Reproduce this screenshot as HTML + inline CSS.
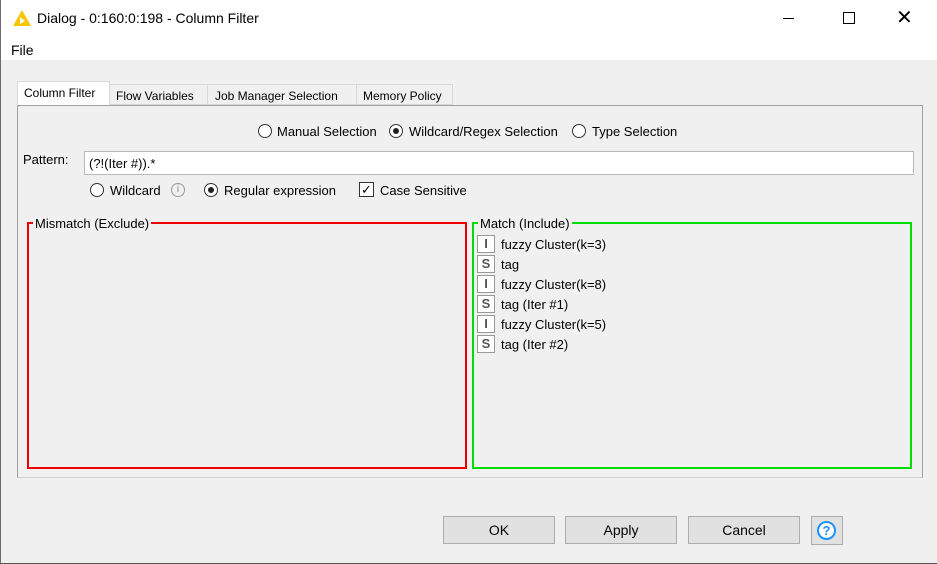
<!DOCTYPE html>
<html><head><style>
*{box-sizing:border-box;margin:0;padding:0}
body{width:937px;height:564px;background:#f0f0f0;font-family:"Liberation Sans",sans-serif;font-size:12px;color:#000;position:relative;overflow:hidden}
.a{position:absolute;white-space:nowrap}
.rad{position:absolute;width:14px;height:14px;border:1px solid #333;border-radius:50%;background:#fff}
.rad.on::after{content:"";position:absolute;left:3px;top:3px;width:6px;height:6px;border-radius:50%;background:#222}
.btn{position:absolute;top:516px;height:28px;width:112px;border:1px solid #adadad;background:#e1e1e1;text-align:center;line-height:26px;font-size:14px}
.ic{position:absolute;left:477px;width:18px;height:18px;border:1px solid #999;background:#fff;font-weight:bold;font-size:13px;text-align:center;line-height:16px;color:#555}
.it{position:absolute;left:501px;font-size:13px}
</style></head><body>
<div class="a" style="left:0;top:0;width:937px;height:60px;background:#fff"></div>
<div class="a" style="left:0;top:0;width:1px;height:564px;background:#6b6b6b"></div>
<div class="a" style="left:0;top:563px;width:937px;height:1px;background:#555"></div>
<svg class="a" style="left:12px;top:9px" width="20" height="18"><polygon points="10,1 19,17 1,17" fill="#f6c700"/><polygon points="8,8 13,12 8,15" fill="#fff"/></svg>
<div class="a" style="left:37px;top:10px;font-size:14px">Dialog - 0:160:0:198 - Column Filter</div>
<div class="a" style="left:783px;top:18px;width:11px;height:1px;background:#000"></div>
<div class="a" style="left:843px;top:12px;width:12px;height:12px;border:1px solid #000"></div>
<div class="a" style="left:896px;top:5px;font-size:20px;font-weight:300">✕</div>
<div class="a" style="left:11px;top:42px;font-size:14px">File</div>
<div class="a" style="left:17px;top:81px;width:93px;height:24px;background:#fff;border:1px solid #d9d9d9;border-bottom:none"></div>
<div class="a" style="left:24px;top:86px">Column Filter</div>
<div class="a" style="left:110px;top:84px;width:98px;height:21px;border:1px solid #d9d9d9;border-left:none"></div>
<div class="a" style="left:116px;top:89px">Flow Variables</div>
<div class="a" style="left:208px;top:84px;width:149px;height:21px;border:1px solid #d9d9d9;border-left:none"></div>
<div class="a" style="left:215px;top:89px">Job Manager Selection</div>
<div class="a" style="left:357px;top:84px;width:96px;height:21px;border:1px solid #d9d9d9;border-left:none"></div>
<div class="a" style="left:363px;top:89px">Memory Policy</div>
<div class="a" style="left:17px;top:105px;width:906px;height:373px;border:1px solid #a0a0a0;border-bottom-color:#d0d0d0"></div>
<div class="rad" style="left:258px;top:124px"></div><div class="a" style="left:277px;top:124px;font-size:13px">Manual Selection</div>
<div class="rad on" style="left:389px;top:124px"></div><div class="a" style="left:409px;top:124px;font-size:13px">Wildcard/Regex Selection</div>
<div class="rad" style="left:572px;top:124px"></div><div class="a" style="left:592px;top:124px;font-size:13px">Type Selection</div>
<div class="a" style="left:23px;top:152px;font-size:13px">Pattern:</div>
<div class="a" style="left:84px;top:151px;width:830px;height:24px;background:#fff;border:1px solid #b8b8b8"></div>
<div class="a" style="left:89px;top:156px;font-size:13px">(?!(Iter #)).*</div>
<div class="rad" style="left:90px;top:183px"></div><div class="a" style="left:110px;top:183px;font-size:13px">Wildcard</div>
<div class="a" style="left:171px;top:183px;width:14px;height:14px;border:1px solid #999;border-radius:50%;color:#888;font-size:10px;text-align:center;line-height:12px">i</div>
<div class="rad on" style="left:204px;top:183px"></div><div class="a" style="left:224px;top:183px;font-size:13px">Regular expression</div>
<div class="a" style="left:359px;top:182px;width:15px;height:15px;border:1px solid #333;background:#fff;font-size:13px;line-height:13px;text-align:center">✓</div>
<div class="a" style="left:380px;top:183px;font-size:13px">Case Sensitive</div>
<div class="a" style="left:27px;top:222px;width:440px;height:247px;border:2px solid #ee0000"></div>
<div class="a" style="left:33px;top:216px;background:#f0f0f0;padding:0 2px;font-size:13px">Mismatch (Exclude)</div>
<div class="a" style="left:472px;top:222px;width:440px;height:247px;border:2px solid #00dd00"></div>
<div class="a" style="left:478px;top:216px;background:#f0f0f0;padding:0 2px;font-size:13px">Match (Include)</div>
<div class="ic" style="top:235px">I</div><div class="it" style="top:237px">fuzzy Cluster(k=3)</div>
<div class="ic" style="top:255px">S</div><div class="it" style="top:257px">tag</div>
<div class="ic" style="top:275px">I</div><div class="it" style="top:277px">fuzzy Cluster(k=8)</div>
<div class="ic" style="top:295px">S</div><div class="it" style="top:297px">tag (Iter #1)</div>
<div class="ic" style="top:315px">I</div><div class="it" style="top:317px">fuzzy Cluster(k=5)</div>
<div class="ic" style="top:335px">S</div><div class="it" style="top:337px">tag (Iter #2)</div>
<div class="btn" style="left:443px">OK</div>
<div class="btn" style="left:565px">Apply</div>
<div class="btn" style="left:688px">Cancel</div>
<div class="a" style="left:811px;top:516px;width:32px;height:29px;border:1px solid #adadad;background:#e1e1e1"></div>
<div class="a" style="left:817px;top:521px;width:19px;height:19px;border:2px solid #1e90ff;border-radius:50%;background:#fff;color:#1e90ff;font-weight:bold;font-size:13px;text-align:center;line-height:15px">?</div>
</body></html>
